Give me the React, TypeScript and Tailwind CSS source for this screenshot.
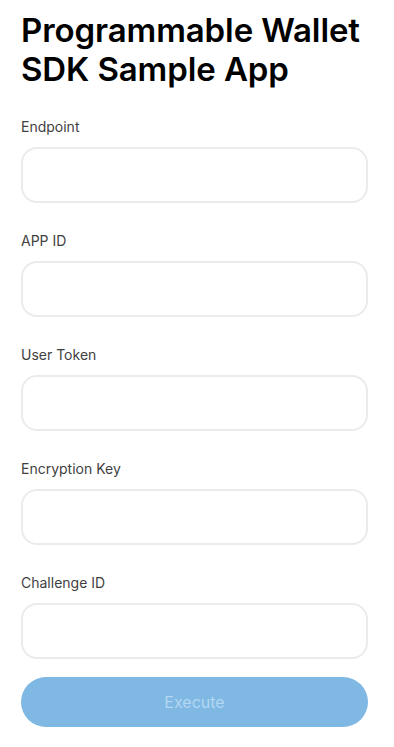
const fields = ["Endpoint", "APP ID", "User Token", "Encryption Key", "Challenge ID"];

export default function App() {
  return (
    <div className="min-h-screen bg-white pl-[21px] pr-[26px] pt-[11px] font-['Inter',sans-serif]">
      <h1 className="text-[33px] font-semibold leading-[39px] tracking-[-0.1px] text-black">
        Programmable Wallet
        <br />
        SDK Sample App
      </h1>
      <div className="mt-[28px] flex flex-col gap-[28px]">
        {fields.map((f) => (
          <div key={f} className="flex flex-col gap-[10px]">
            <label className="text-[14px] leading-[20px] text-[#3f3f3f]">{f}</label>
            <input
              type="text"
              className="h-[56px] w-full rounded-[16px] border-2 border-[#ebebeb] bg-white px-4 outline-none"
            />
          </div>
        ))}
      </div>
      <button className="mt-[18px] h-[50px] w-full rounded-full bg-[#7fb8e3] text-[16px] text-[#b3d7f2]">
        Execute
      </button>
    </div>
  );
}
